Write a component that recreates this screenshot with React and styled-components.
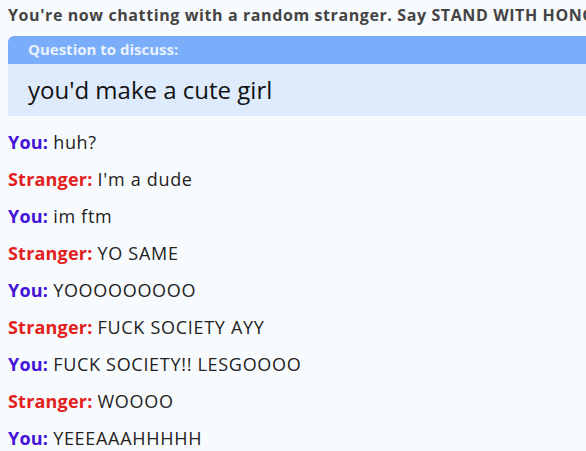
import styled, { createGlobalStyle } from 'styled-components';

const GlobalStyle = createGlobalStyle`
  html, body {
    margin: 0;
    padding: 0;
    background: #f8fbfe;
    overflow: hidden;
  }
  body {
    font-family: 'Open Sans', 'Noto Sans', sans-serif;
  }
`;

const messages = [
  { who: 'you', text: 'huh?' },
  { who: 'stranger', text: "I'm a dude" },
  { who: 'you', text: 'im ftm' },
  { who: 'stranger', text: 'YO SAME' },
  { who: 'you', text: 'YOOOOOOOOO' },
  { who: 'stranger', text: 'FUCK SOCIETY AYY' },
  { who: 'you', text: 'FUCK SOCIETY!! LESGOOOO' },
  { who: 'stranger', text: 'WOOOO' },
  { who: 'you', text: 'YEEEAAAHHHHH' },
];

function App() {
  return (
    <>
      <GlobalStyle />
      <Page>
        <Status>
          You're now chatting with a random stranger. Say STAND WITH HONG KONG!
        </Status>
        <Question>
          <QuestionHead>Question to discuss:</QuestionHead>
          <QuestionBody>you'd make a cute girl</QuestionBody>
        </Question>
        <Log>
          {messages.map((m, i) => (
            <Line key={i}>
              <Who $who={m.who}>{m.who === 'you' ? 'You:' : 'Stranger:'}</Who>
              <Text>{m.text}</Text>
            </Line>
          ))}
        </Log>
      </Page>
    </>
  );
}

const Page = styled.div`
  width: 900px;
  padding: 4px 0 0 8px;
`;

const Status = styled.div`
  font-size: 16px;
  font-weight: 700;
  letter-spacing: 0.6px;
  color: #444;
  white-space: nowrap;
  line-height: 23px;
`;

const Question = styled.div`
  margin-top: 9px;
`;

const QuestionHead = styled.div`
  background: #7aaefb;
  color: #eaf2ff;
  font-size: 15px;
  font-weight: 700;
  height: 28px;
  line-height: 27px;
  padding-left: 20px;
  border-radius: 6px 6px 0 0;
`;

const QuestionBody = styled.div`
  background: #deebfc;
  color: #111;
  font-size: 24px;
  height: 52px;
  line-height: 52px;
  padding-left: 20px;
`;

const Log = styled.div`
  display: flex;
  flex-direction: column;
  padding-top: 8px;
`;

const Line = styled.div`
  display: flex;
  gap: 5px;
  font-size: 18px;
  line-height: 37px;
  color: #222;
  white-space: nowrap;
`;

const Who = styled.b`
  letter-spacing: 0.2px;
  color: ${(p) => (p.$who === 'you' ? '#4414d8' : '#e3211c')};
`;

const Text = styled.span`
  letter-spacing: 0.7px;
`;

export default App;
